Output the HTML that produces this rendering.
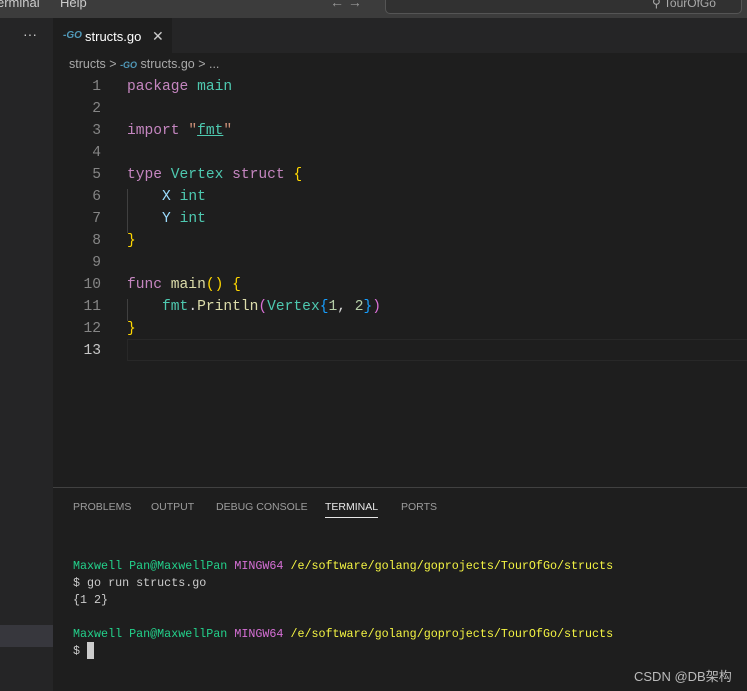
<!DOCTYPE html>
<html><head><style>
body{margin:0;width:747px;height:691px;background:#1e1e1e;overflow:hidden;position:relative;font-family:"Liberation Sans",sans-serif}
.abs{position:absolute}
.code{font-family:"Liberation Mono",monospace;font-size:14.6px;white-space:pre}
.ln{position:absolute;left:60px;width:41px;text-align:right;color:#858585}
.cl{position:absolute;left:127px;color:#d4d4d4}
.k{color:#c586c0}.t{color:#4ec9b0}.f{color:#dcdcaa}.v{color:#9cdcfe}.n{color:#b5cea8}.s{color:#ce9178}.b1{color:#ffd700}.b2{color:#da70d6}.b3{color:#179fff}
.term{font-family:"Liberation Mono",monospace;font-size:11.7px;white-space:pre;position:absolute;left:73px;color:#cccccc}
.g{color:#23d18b}.m{color:#d670d6}.y{color:#f5f543}
.tab{position:absolute;top:501px;font-size:10.5px;color:#9d9d9d}
</style></head><body>
<div class="abs" style="left:0;top:0;width:747px;height:18px;background:#3c3c3c"></div>
<div class="abs" style="left:-3px;top:-5px;font-size:13px;color:#ccc">erminal</div>
<div class="abs" style="left:60px;top:-5px;font-size:13px;color:#ccc">Help</div>
<div class="abs" style="left:330px;top:-6px;font-size:14px;color:#999">← →</div>
<div class="abs" style="left:385px;top:-10px;width:355px;height:22px;border:1px solid #555;border-radius:5px;background:#313131"></div>
<div class="abs" style="left:652px;top:-4px;font-size:12px;color:#aaa">⚲ TourOfGo</div>
<div class="abs" style="left:0;top:18px;width:53px;height:673px;background:#252526"></div>
<div class="abs" style="left:0;top:625px;width:53px;height:22px;background:#37373d"></div>
<div class="abs" style="left:23px;top:26px;color:#ccc;font-size:14px">···</div>
<div class="abs" style="left:53px;top:18px;width:694px;height:35px;background:#252526"></div>
<div class="abs" style="left:53px;top:18px;width:119px;height:35px;background:#1e1e1e"></div>
<div class="abs" style="left:63px;top:30px;font-size:10px;font-weight:bold;font-style:italic;color:#519aba">-GO</div>
<div class="abs" style="left:85px;top:29px;font-size:13px;color:#fff">structs.go</div>
<div class="abs" style="left:152px;top:28px;font-size:14px;color:#ccc">✕</div>
<div class="abs" style="left:69px;top:57px;font-size:12.5px;color:#a9a9a9">structs &gt; <span style="color:#519aba;font-size:9px;font-weight:bold;font-style:italic">-GO</span> structs.go &gt; ...</div>
<div class="abs" style="left:127px;top:339px;width:620px;height:20px;border:1px solid #282828;border-right:none"></div>
<div class="abs" style="left:127px;top:189px;width:1px;height:44px;background:#404040"></div>
<div class="abs" style="left:127px;top:299px;width:1px;height:22px;background:#404040"></div>
<div class="code">
<div class="ln" style="top:79px">1</div><div class="cl" style="top:79px"><span class="k">package</span> <span class="t">main</span></div>
<div class="ln" style="top:101px">2</div>
<div class="ln" style="top:123px">3</div><div class="cl" style="top:123px"><span class="k">import</span> <span class="s">"<span class="t" style="text-decoration:underline">fmt</span>"</span></div>
<div class="ln" style="top:145px">4</div>
<div class="ln" style="top:167px">5</div><div class="cl" style="top:167px"><span class="k">type</span> <span class="t">Vertex</span> <span class="k">struct</span> <span class="b1">{</span></div>
<div class="ln" style="top:189px">6</div><div class="cl" style="top:189px">    <span class="v">X</span> <span class="t">int</span></div>
<div class="ln" style="top:211px">7</div><div class="cl" style="top:211px">    <span class="v">Y</span> <span class="t">int</span></div>
<div class="ln" style="top:233px">8</div><div class="cl" style="top:233px"><span class="b1">}</span></div>
<div class="ln" style="top:255px">9</div>
<div class="ln" style="top:277px">10</div><div class="cl" style="top:277px"><span class="k">func</span> <span class="f">main</span><span class="b1">()</span> <span class="b1">{</span></div>
<div class="ln" style="top:299px">11</div><div class="cl" style="top:299px">    <span class="t">fmt</span>.<span class="f">Println</span><span class="b2">(</span><span class="t">Vertex</span><span class="b3">{</span><span class="n">1</span>, <span class="n">2</span><span class="b3">}</span><span class="b2">)</span></div>
<div class="ln" style="top:321px">12</div><div class="cl" style="top:321px"><span class="b1">}</span></div>
<div class="ln" style="top:343px;color:#c6c6c6">13</div>
</div>
<div class="abs" style="left:53px;top:487px;width:694px;height:1px;background:#414141"></div>
<div class="tab" style="left:73px">PROBLEMS</div>
<div class="tab" style="left:151px">OUTPUT</div>
<div class="tab" style="left:216px">DEBUG CONSOLE</div>
<div class="tab" style="left:325px;color:#e7e7e7">TERMINAL</div>
<div class="abs" style="left:325px;top:517px;width:53px;height:1px;background:#e7e7e7"></div>
<div class="tab" style="left:401px">PORTS</div>
<div class="term" style="top:559px"><span class="g">Maxwell Pan@MaxwellPan</span> <span class="m">MINGW64</span> <span class="y">/e/software/golang/goprojects/TourOfGo/structs</span></div>
<div class="term" style="top:576px">$ go run structs.go</div>
<div class="term" style="top:593px">{1 2}</div>
<div class="term" style="top:627px"><span class="g">Maxwell Pan@MaxwellPan</span> <span class="m">MINGW64</span> <span class="y">/e/software/golang/goprojects/TourOfGo/structs</span></div>
<div class="term" style="top:644px">$ </div>
<div class="abs" style="left:87px;top:642px;width:7px;height:17px;background:#ccc"></div>
<div class="abs" style="left:634px;top:666px;font-size:13px;color:#bbb;font-family:'Liberation Sans','Noto Sans CJK SC',sans-serif">CSDN @DB架构</div>
</body></html>
